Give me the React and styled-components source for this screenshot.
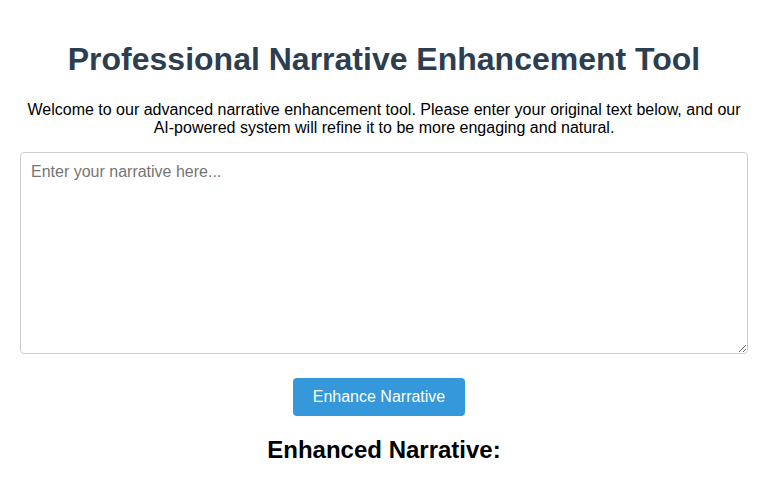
import React from "react";
import styled, { createGlobalStyle } from "styled-components";

const GlobalStyle = createGlobalStyle`
  html, body {
    margin: 0;
    padding: 0;
    background: #ffffff;
  }
  body {
    font-family: "Liberation Sans", Arial, sans-serif;
    color: #000000;
  }
`;

const Page = styled.main`
  padding: 20px;
  display: flex;
  flex-direction: column;
  align-items: center;
  text-align: center;
`;

const Title = styled.h1`
  margin: 21px 0 0;
  font-size: 32px;
  font-weight: bold;
  color: #2c3e50;
`;

const Intro = styled.p`
  margin: 23px 0 0;
  font-size: 16px;
  line-height: normal;
`;

const NarrativeInput = styled.textarea`
  box-sizing: border-box;
  margin-top: 15px;
  width: 100%;
  height: 202px;
  padding: 10px;
  border: 1px solid #cccccc;
  border-radius: 4px;
  font-family: "Liberation Sans", Arial, sans-serif;
  font-size: 16px;
  color: #333333;
  &::placeholder {
    color: #757575;
  }
`;

const ActionButton = styled.button`
  margin: 24px 10px 0 0;
  padding: 10px 20px;
  border: none;
  border-radius: 4px;
  background: #3498db;
  color: #ffffff;
  font-family: "Liberation Sans", Arial, sans-serif;
  font-size: 16px;
  line-height: 18px;
  cursor: pointer;
`;

const ResultHeading = styled.h2`
  margin: 20px 0 0;
  font-size: 24px;
  font-weight: bold;
`;

export default function App() {
  return (
    <>
      <GlobalStyle />
      <Page>
        <Title>Professional Narrative Enhancement Tool</Title>
        <Intro>
          Welcome to our advanced narrative enhancement tool. Please enter your original text below, and our
          AI-powered system will refine it to be more engaging and natural.
        </Intro>
        <NarrativeInput placeholder="Enter your narrative here..." />
        <ActionButton>Enhance Narrative</ActionButton>
        <ResultHeading>Enhanced Narrative:</ResultHeading>
      </Page>
    </>
  );
}
